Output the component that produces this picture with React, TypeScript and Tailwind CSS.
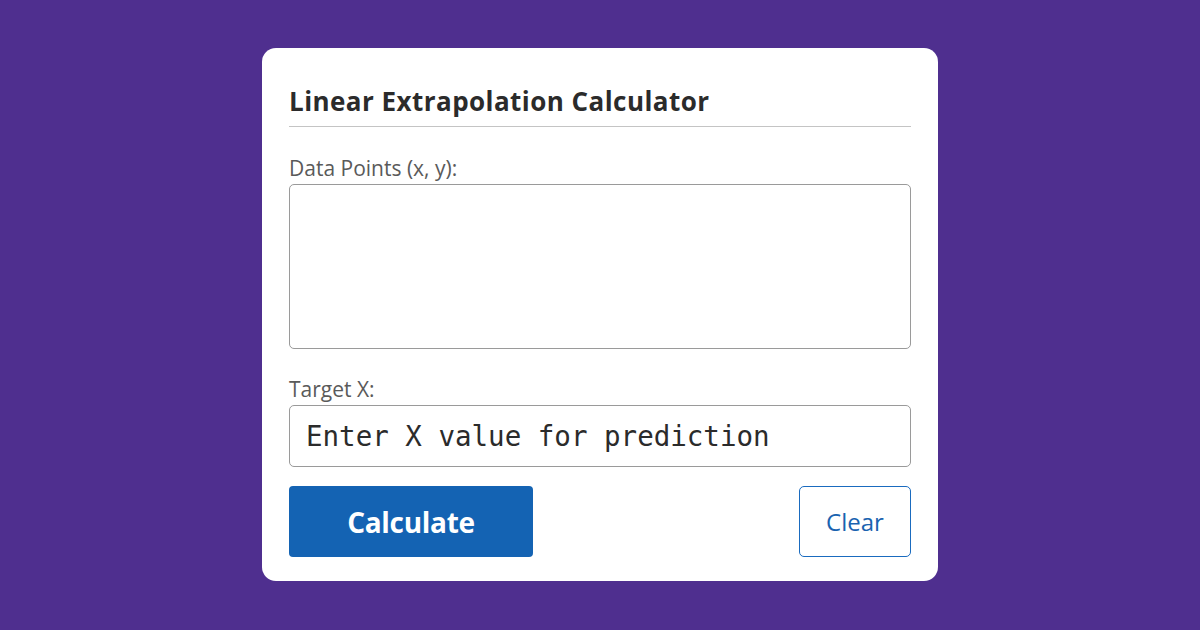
export default function App() {
  return (
    <div className="flex h-[630px] w-[1200px] items-start justify-center bg-[#4f2f8f] pt-12 font-['Open_Sans',sans-serif]">
      <div className="flex h-[533px] w-[676px] flex-col rounded-[14px] bg-white px-[27px] pt-[36px]">
        <h1 className="border-b border-[#c4c4c4] pb-[8px] text-[26px] font-bold leading-[34px] tracking-[0.45px] text-[#2b2b2b]">
          Linear Extrapolation Calculator
        </h1>

        <label className="mt-[28px] text-[21px] leading-[26px] text-[#5a5a5a]">Data Points (x, y):</label>
        <textarea className="mt-[3px] h-[165px] w-full resize-none rounded-[5px] border border-[#9a9a9a] bg-white" />

        <label className="mt-[27px] text-[21px] leading-[26px] text-[#5a5a5a]">Target X:</label>
        <input
          className="mt-[3px] h-[62px] w-full rounded-[5px] border border-[#9a9a9a] px-[16px] font-['DejaVu_Sans_Mono',monospace] text-[27.5px] text-[#2b2b2b] placeholder:text-[#2b2b2b]"
          placeholder="Enter X value for prediction"
        />

        <div className="mt-[19px] flex items-center justify-between">
          <button className="h-[71px] w-[244px] rounded-[4px] bg-[#1463b3] text-[28px] font-bold tracking-[-0.3px] text-white">
            Calculate
          </button>
          <button className="h-[71px] w-[112px] rounded-[5px] border border-[#1a6bbf] bg-white text-[24px] text-[#1a63b0]">
            Clear
          </button>
        </div>
      </div>
    </div>
  );
}
